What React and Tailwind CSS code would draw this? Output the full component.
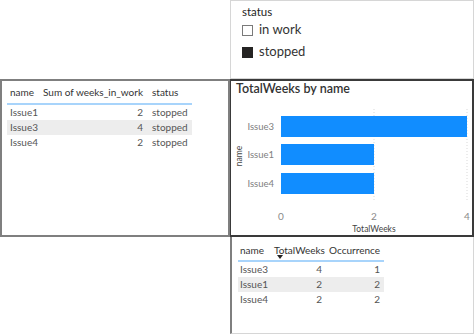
import React from 'react';

const font = { fontFamily: 'Lato, "Open Sans", sans-serif' };

const leftRows = [
  { name: 'Issue1', weeks: 2, status: 'stopped' },
  { name: 'Issue3', weeks: 4, status: 'stopped', hl: true },
  { name: 'Issue4', weeks: 2, status: 'stopped' },
];

const bottomRows = [
  { name: 'Issue3', total: 4, occ: 1 },
  { name: 'Issue1', total: 2, occ: 2, hl: true },
  { name: 'Issue4', total: 2, occ: 2 },
];

const bars = [
  { name: 'Issue3', value: 4, y: 35 },
  { name: 'Issue1', value: 2, y: 63 },
  { name: 'Issue4', value: 2, y: 92 },
];

const Slicer = () => (
  <div className="border border-[#d6d6d6] h-full pl-[11px] pt-[3px] text-[#252423]">
    <div className="text-[11.5px] leading-[16px]">status</div>
    <div className="flex items-center gap-[6px] mt-[4px] h-[12px]">
      <span className="w-[11px] h-[11px] border border-[#7a7a7a] bg-white" />
      <span className="text-[13px] text-[#333]">in work</span>
    </div>
    <div className="flex items-center gap-[6px] mt-[10px] h-[12px]">
      <span className="w-[11px] h-[11px] bg-[#252423]" />
      <span className="text-[13px] text-[#333]">stopped</span>
    </div>
  </div>
);

const LeftTable = () => (
  <div className="border-2 border-[#7f7f7f] h-full pt-[1px] pl-[5px]">
    <div className="w-[185px] text-[10px] whitespace-nowrap">
      <div className="flex h-[23px] items-center border-b-2 border-[#a8d4fb] text-[#333]">
        <span className="w-[36px] pl-[3px]">name</span>
        <span className="w-[100px] text-right">Sum of weeks_in_work</span>
        <span className="pl-[9px]">status</span>
      </div>
      {leftRows.map((r) => (
        <div
          key={r.name}
          className={`flex h-[15px] items-center text-[#555] ${r.hl ? 'bg-[#ededed]' : ''}`}
        >
          <span className="w-[36px] pl-[3px]">{r.name}</span>
          <span className="w-[100px] text-right">{r.weeks}</span>
          <span className="pl-[9px]">{r.status}</span>
        </div>
      ))}
    </div>
  </div>
);

const Chart = () => (
  <div className="relative h-full border-t-2 border-r-2 border-b-2 border-l border-[#3a3a3a]">
    <div className="absolute left-[5px] top-0 text-[12.5px] font-semibold text-[#333] leading-[16px] whitespace-nowrap">
      TotalWeeks by name
    </div>
    <svg width="243" height="154" className="block" style={font}>
      {[143, 236].map((x) => (
        <line key={x} x1={x} y1="28" x2={x} y2="120" stroke="#d9d9d9" strokeDasharray="1 2" />
      ))}
      {bars.map((b) => (
        <g key={b.name}>
          <rect x="50" y={b.y} width={b.value * 46.5} height="21" fill="#118dff" />
          <text x="43" y={b.y + 14} textAnchor="end" fontSize="9.5" fill="#808080">
            {b.name}
          </text>
        </g>
      ))}
      {[0, 2, 4].map((v) => (
        <text key={v} x={50 + v * 46.5} y="139" textAnchor="middle" fontSize="10" fill="#8a8a8a">
          {v}
        </text>
      ))}
      <text x="143" y="151" textAnchor="middle" fontSize="8.5" fill="#444">
        TotalWeeks
      </text>
      <text
        x="0"
        y="0"
        transform="translate(11 75) rotate(-90)"
        textAnchor="middle"
        fontSize="8.5"
        fill="#444"
      >
        name
      </text>
    </svg>
  </div>
);

const BottomTable = () => (
  <div className="h-full border-l-2 border-[#7f7f7f] border-b border-r border-r-[#d6d6d6] border-b-[#d6d6d6] pl-[6px] pt-[3px]">
    <div className="w-[146px] text-[10px] whitespace-nowrap">
      <div className="relative flex h-[22px] items-center border-b-2 border-[#a8d4fb] text-[#333]">
        <span className="w-[36px] pl-[2px]">name</span>
        <span className="w-[48px] text-right">TotalWeeks</span>
        <span className="w-[58px] text-right">Occurrence</span>
        <span className="absolute left-[39px] bottom-[1px] w-0 h-0 border-l-[3px] border-r-[3px] border-t-[4px] border-l-transparent border-r-transparent border-t-[#252423]" />
      </div>
      {bottomRows.map((r) => (
        <div
          key={r.name}
          className={`flex h-[15px] items-center text-[#555] ${r.hl ? 'bg-[#ededed]' : ''}`}
        >
          <span className="w-[36px] pl-[2px]">{r.name}</span>
          <span className="w-[48px] text-right">{r.total}</span>
          <span className="w-[58px] text-right">{r.occ}</span>
        </div>
      ))}
    </div>
  </div>
);

export default function App() {
  return (
    <div
      className="w-[474px] h-[334px] bg-white overflow-hidden grid grid-cols-[230px_244px] grid-rows-[79px_158px_97px]"
      style={font}
    >
      <div />
      <Slicer />
      <LeftTable />
      <Chart />
      <div />
      <BottomTable />
    </div>
  );
}
